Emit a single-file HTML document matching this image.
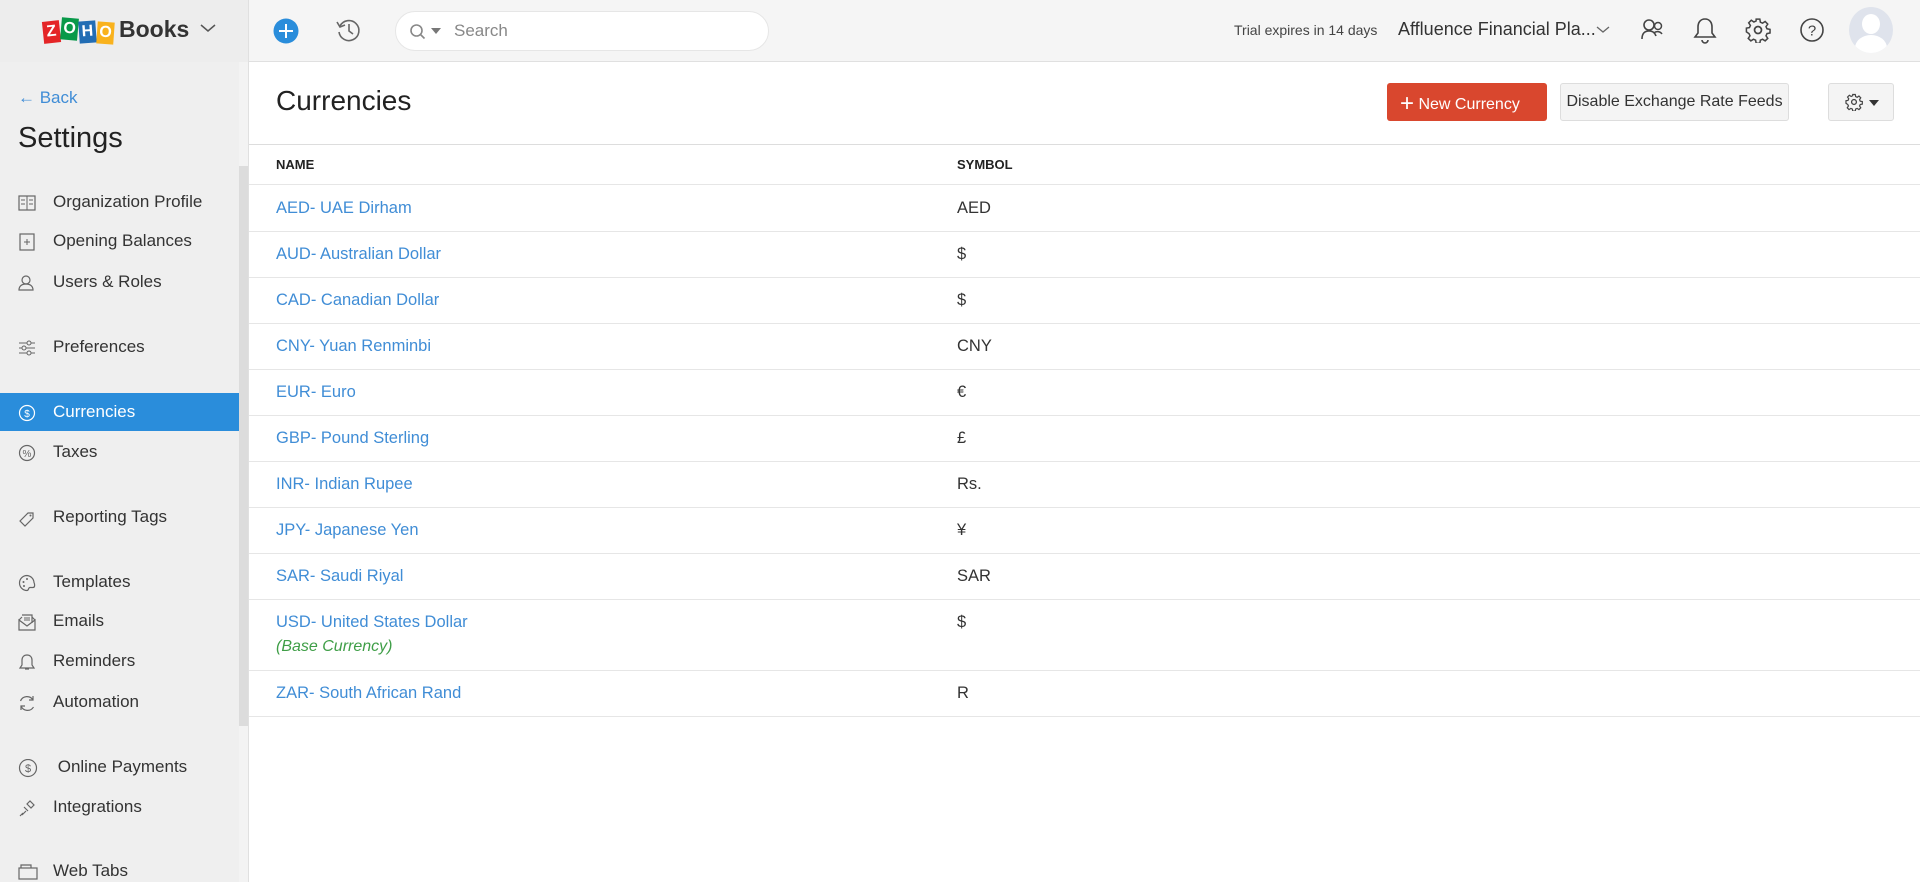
<!DOCTYPE html>
<html><head><meta charset="utf-8">
<style>
*{box-sizing:border-box;margin:0;padding:0}
body{width:1920px;height:882px;overflow:hidden;font-family:"Liberation Sans",sans-serif;background:#fff;color:#222;position:relative}
.top{position:absolute;left:0;top:0;width:1920px;height:62px;background:#f5f5f5;border-bottom:1px solid #e0e0e0}
.logoarea{position:absolute;left:0;top:0;width:249px;height:62px;background:#ededed;border-right:1px solid #e0e0e0}
.side{position:absolute;left:0;top:62px;width:249px;height:820px;background:#efefef;border-right:1px solid #e0e0e0}
.track{position:absolute;left:239px;top:0;width:9px;height:820px;background:#f3f3f3}
.thumb{position:absolute;left:239px;top:104px;width:9px;height:560px;background:#dcdcdc}
.item{position:absolute;left:0;width:239px;height:38px;font-size:17px;color:#333;line-height:38px;padding-left:53px;white-space:nowrap}
.item svg{position:absolute;left:18px;top:11px}
.item.act{background:#2a8ddb;color:#fff}
.row{position:absolute;left:249px;right:0;border-bottom:1px solid #e6e6e6}
.n{position:absolute;left:276px;font-size:16.5px;color:#408dd6}
.s{position:absolute;left:957px;font-size:16.5px;color:#333}
.ic{position:absolute}
.lg{position:absolute;width:17px;height:22px;color:#fff;font:bold 16px 'Liberation Sans';text-align:center;line-height:22px}
</style></head><body>
<div class="top"></div>
<div class="logoarea">
 <div style="position:absolute;left:43px;top:18px;height:28px;width:72px">
  <span class="lg" style="left:0;top:3px;background:#e42527;transform:rotate(-6deg)">Z</span>
  <span class="lg" style="left:18px;top:0;background:#089949;transform:rotate(5deg)">O</span>
  <span class="lg" style="left:36px;top:3px;background:#226db4;transform:rotate(-4deg)">H</span>
  <span class="lg" style="left:54px;top:4px;background:#f9b21d;transform:rotate(4deg)">O</span>
 </div>
 <div style="position:absolute;left:119px;top:16px;font-size:23px;font-weight:bold;color:#333">Books</div>
 <svg class="ic" style="left:199px;top:22px" width="18" height="12"><path d="M2 3l7 6 7-6" fill="none" stroke="#555" stroke-width="1.5"/></svg>
</div>
<svg class="ic" style="left:273px;top:18px" width="26" height="26"><circle cx="13" cy="13" r="12.5" fill="#2a8ddb"/><path d="M13 6v14M6 13h14" stroke="#fff" stroke-width="2"/></svg>
<svg class="ic" style="left:335px;top:16px" width="28" height="28"><path d="M5 10A10 10 0 1 1 4 16" fill="none" stroke="#666" stroke-width="1.6"/><path d="M2 6l3 5 5-2" fill="none" stroke="#666" stroke-width="1.6"/><path d="M14 8v7l4 3" fill="none" stroke="#666" stroke-width="1.6"/></svg>
<div style="position:absolute;left:395px;top:11px;width:374px;height:40px;background:#fff;border:1px solid #e6e6e6;border-radius:20px">
 <svg class="ic" style="left:13px;top:11px" width="18" height="18"><circle cx="7.5" cy="7.5" r="5.5" fill="none" stroke="#888" stroke-width="1.6"/><path d="M11.5 11.5l4 4" stroke="#888" stroke-width="1.6"/></svg>
 <svg class="ic" style="left:35px;top:16px" width="10" height="6"><path d="M0 0h10L5 6z" fill="#777"/></svg>
 <span style="position:absolute;left:58px;top:9px;font-size:17px;color:#888">Search</span>
</div>
<div style="position:absolute;left:1234px;top:22px;font-size:14px;color:#444">Trial expires in 14 days</div>
<div style="position:absolute;left:1398px;top:19px;font-size:18px;color:#333">Affluence Financial Pla...</div>
<svg class="ic" style="left:1596px;top:25px" width="14" height="10"><path d="M1 2l6 5 6-5" fill="none" stroke="#666" stroke-width="1.3"/></svg>
<svg class="ic" style="left:1640px;top:17px" width="26" height="26"><circle cx="9" cy="8" r="5" fill="none" stroke="#444" stroke-width="1.6"/><path d="M2 22c0-6 3-8 7-8s6 2 7 5" fill="none" stroke="#444" stroke-width="1.6"/><circle cx="18" cy="9" r="3.5" fill="none" stroke="#444" stroke-width="1.5"/><path d="M14 16c2-2 6-2 8 1" fill="none" stroke="#444" stroke-width="1.5"/></svg>
<svg class="ic" style="left:1692px;top:16px" width="26" height="28"><path d="M13 3c-5 0-7 4-7 8v6l-3 4h20l-3-4v-6c0-4-2-8-7-8z" fill="none" stroke="#444" stroke-width="1.6"/><path d="M10 24a3 3 0 0 0 6 0" fill="none" stroke="#444" stroke-width="1.6"/></svg>
<svg class="ic" style="left:1745px;top:17px" width="26" height="26" viewBox="0 0 24 24"><circle cx="12" cy="12" r="3.2" fill="none" stroke="#444" stroke-width="1.6"/><path d="M10.3 2h3.4l.5 2.8 2 .9 2.4-1.6 2.4 2.4-1.6 2.4.9 2 2.8.5v3.4l-2.8.5-.9 2 1.6 2.4-2.4 2.4-2.4-1.6-2 .9-.5 2.8h-3.4l-.5-2.8-2-.9-2.4 1.6-2.4-2.4 1.6-2.4-.9-2L1.3 13.7v-3.4l2.8-.5.9-2-1.6-2.4 2.4-2.4 2.4 1.6 2-.9z" fill="none" stroke="#444" stroke-width="1.4"/></svg>
<svg class="ic" style="left:1799px;top:17px" width="26" height="26"><circle cx="13" cy="13" r="11" fill="none" stroke="#444" stroke-width="1.6"/><text x="13" y="18.5" font-size="15" text-anchor="middle" fill="#444" font-family="Liberation Sans">?</text></svg>
<div style="position:absolute;left:1849px;top:7px;width:44px;height:46px;border-radius:50%;background:#dfe3ec;overflow:hidden"><div style="position:absolute;left:13px;top:7px;width:18px;height:20px;border-radius:50%;background:#fff"></div><div style="position:absolute;left:6px;top:28px;width:32px;height:26px;border-radius:50%;background:#fff"></div></div>

<div class="side">
 <div class="track"></div><div class="thumb"></div>
 <div style="position:absolute;left:18px;top:26px;font-size:17px;color:#408dd6">&#8592; Back</div>
 <div style="position:absolute;left:18px;top:60px;font-size:29px;color:#222">Settings</div>
</div>
<div class="item" style="top:183px"><svg width="18" height="18"><rect x="1" y="2" width="16" height="14" fill="none" stroke="#666" stroke-width="1.2"/><path d="M9 2v14M3 6h4M3 10h4M11 6h4M11 10h4" stroke="#666"/></svg>Organization Profile</div>
<div class="item" style="top:222px"><svg width="18" height="18"><rect x="2" y="1" width="14" height="16" fill="none" stroke="#666" stroke-width="1.2"/><path d="M9 6v6M6 9h6" stroke="#666"/></svg>Opening Balances</div>
<div class="item" style="top:263px"><svg width="18" height="18"><circle cx="8" cy="6" r="4" fill="none" stroke="#666" stroke-width="1.2"/><path d="M1 16c0-4 3-6 7-6s7 2 7 6z" fill="none" stroke="#666" stroke-width="1.2"/></svg>Users &amp; Roles</div>
<div class="item" style="top:328px"><svg width="18" height="18"><path d="M1 4h16M1 9h16M1 14h16" stroke="#666" stroke-width="1.1"/><circle cx="11" cy="4" r="2" fill="#efefef" stroke="#666"/><circle cx="6" cy="9" r="2" fill="#efefef" stroke="#666"/><circle cx="11" cy="14" r="2" fill="#efefef" stroke="#666"/></svg>Preferences</div>
<div class="item act" style="top:393px"><svg width="18" height="18"><circle cx="9" cy="9" r="7.5" fill="none" stroke="#fff" stroke-width="1.2"/><text x="9" y="13" font-size="10" text-anchor="middle" fill="#fff" font-family="Liberation Sans">$</text></svg>Currencies</div>
<div class="item" style="top:433px"><svg width="18" height="18"><circle cx="9" cy="9" r="7.5" fill="none" stroke="#666" stroke-width="1.2"/><text x="9" y="13" font-size="10" text-anchor="middle" fill="#666" font-family="Liberation Sans">%</text></svg>Taxes</div>
<div class="item" style="top:498px"><svg width="18" height="18"><path d="M2 12l8-8h5v5l-8 8z" fill="none" stroke="#666" stroke-width="1.2"/><circle cx="12.5" cy="6.5" r="1" fill="#666"/></svg>Reporting Tags</div>
<div class="item" style="top:563px"><svg width="18" height="18"><path d="M9 1.5a7.5 7.5 0 1 0 0 15c2 0 1-3 3-3h3c2 0 2-3 1-5A7.5 7.5 0 0 0 9 1.5z" fill="none" stroke="#666" stroke-width="1.2"/><circle cx="5.5" cy="8" r="1" fill="#666"/><circle cx="9" cy="5" r="1" fill="#666"/><circle cx="6" cy="12" r="1" fill="#666"/></svg>Templates</div>
<div class="item" style="top:602px"><svg width="18" height="18"><path d="M1 7l8 6 8-6v10H1zM1 7l3-3M17 7l-3-3M4 2h10v8" fill="none" stroke="#666" stroke-width="1.2"/><path d="M6 5h6M6 7h6" stroke="#666"/></svg>Emails</div>
<div class="item" style="top:642px"><svg width="18" height="18"><path d="M9 2c-3 0-5 2-5 5v5l-2 3h14l-2-3V7c0-3-2-5-5-5zM7 16h4" fill="none" stroke="#666" stroke-width="1.2"/></svg>Reminders</div>
<div class="item" style="top:683px"><svg width="18" height="18"><path d="M15 6A7 7 0 0 0 2.5 7M3 12a7 7 0 0 0 12.5 1M15 2v4h-4M3 16v-4h4" fill="none" stroke="#666" stroke-width="1.2"/></svg>Automation</div>
<div class="item" style="top:748px"><svg width="20" height="20"><circle cx="10" cy="9" r="8.5" fill="none" stroke="#666" stroke-width="1.2"/><text x="10" y="13" font-size="11" text-anchor="middle" fill="#666" font-family="Liberation Sans">$</text></svg>&nbsp;Online Payments</div>
<div class="item" style="top:788px"><svg width="18" height="18"><path d="M4 16l4-4M6 8l4 4M9 5l4 4 3-3-4-4zM2 17l3-3" fill="none" stroke="#666" stroke-width="1.2"/></svg>Integrations</div>
<div class="item" style="top:852px"><svg width="20" height="18"><rect x="1" y="5" width="18" height="11" fill="none" stroke="#666" stroke-width="1.2"/><path d="M3 5V2h10v3" fill="none" stroke="#666" stroke-width="1.2"/></svg>Web Tabs</div>

<div style="position:absolute;left:276px;top:85px;font-size:28px;color:#222;font-weight:300">Currencies</div>
<div style="position:absolute;left:1387px;top:83px;width:160px;height:38px;background:#d9472e;border-radius:3px;color:#fff;font-size:16px;line-height:38px;padding-left:13px;white-space:nowrap"><span style="font-size:24px;position:relative;top:2px;font-weight:300">+</span> New Currency</div>
<div style="position:absolute;left:1560px;top:83px;width:229px;height:38px;background:#f4f4f4;border:1px solid #ddd;border-radius:3px;color:#333;font-size:16px;line-height:36px;text-align:center;white-space:nowrap">Disable Exchange Rate Feeds</div>
<div style="position:absolute;left:1828px;top:83px;width:66px;height:38px;background:#f4f4f4;border:1px solid #ddd;border-radius:3px">
 <svg class="ic" style="left:16px;top:9px" width="18" height="18" viewBox="0 0 24 24"><circle cx="12" cy="12" r="3.2" fill="none" stroke="#444" stroke-width="1.8"/><path d="M10.3 2h3.4l.5 2.8 2 .9 2.4-1.6 2.4 2.4-1.6 2.4.9 2 2.8.5v3.4l-2.8.5-.9 2 1.6 2.4-2.4 2.4-2.4-1.6-2 .9-.5 2.8h-3.4l-.5-2.8-2-.9-2.4 1.6-2.4-2.4 1.6-2.4-.9-2L1.3 13.7v-3.4l2.8-.5.9-2-1.6-2.4 2.4-2.4 2.4 1.6 2-.9z" fill="none" stroke="#444" stroke-width="1.6"/></svg>
 <svg class="ic" style="left:40px;top:16px" width="10" height="6"><path d="M0 0h10L5 6z" fill="#333"/></svg>
</div>
<div class="row" style="top:144px;height:1px;background:#ddd;border:0"></div>
<div style="position:absolute;left:276px;top:157px;font-size:13px;font-weight:bold;color:#222">NAME</div>
<div style="position:absolute;left:957px;top:157px;font-size:13px;font-weight:bold;color:#222">SYMBOL</div>
<div class="row" style="top:184px;height:1px;background:#e6e6e6;border:0"></div>

<div class="row" style="top:185px;height:47px"></div>
<div class="n" style="top:199px">AED- UAE Dirham</div><div class="s" style="top:199px">AED</div>
<div class="row" style="top:232px;height:46px"></div>
<div class="n" style="top:245px">AUD- Australian Dollar</div><div class="s" style="top:245px">$</div>
<div class="row" style="top:278px;height:46px"></div>
<div class="n" style="top:291px">CAD- Canadian Dollar</div><div class="s" style="top:291px">$</div>
<div class="row" style="top:324px;height:46px"></div>
<div class="n" style="top:337px">CNY- Yuan Renminbi</div><div class="s" style="top:337px">CNY</div>
<div class="row" style="top:370px;height:46px"></div>
<div class="n" style="top:383px">EUR- Euro</div><div class="s" style="top:383px">€</div>
<div class="row" style="top:416px;height:46px"></div>
<div class="n" style="top:429px">GBP- Pound Sterling</div><div class="s" style="top:429px">£</div>
<div class="row" style="top:462px;height:46px"></div>
<div class="n" style="top:475px">INR- Indian Rupee</div><div class="s" style="top:475px">Rs.</div>
<div class="row" style="top:508px;height:46px"></div>
<div class="n" style="top:521px">JPY- Japanese Yen</div><div class="s" style="top:521px">¥</div>
<div class="row" style="top:554px;height:46px"></div>
<div class="n" style="top:567px">SAR- Saudi Riyal</div><div class="s" style="top:567px">SAR</div>
<div class="row" style="top:600px;height:71px"></div>
<div class="n" style="top:613px">USD- United States Dollar</div><div class="s" style="top:613px">$</div>
<div style="position:absolute;left:276px;top:638px;font-size:16px;font-style:italic;color:#3f9e47">(Base Currency)</div>
<div class="row" style="top:671px;height:46px"></div>
<div class="n" style="top:684px">ZAR- South African Rand</div><div class="s" style="top:684px">R</div>
</body></html>
